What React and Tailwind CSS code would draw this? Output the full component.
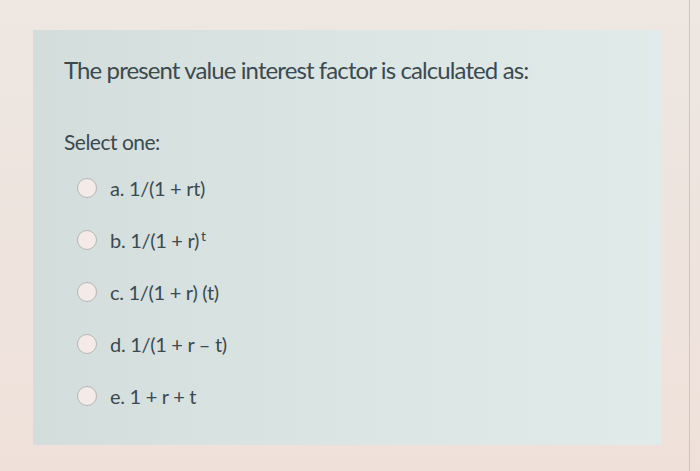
export default function App() {
  const options = [
    { key: 'a', text: <>1/(1 + rt)</> },
    { key: 'b', text: <>1/(1 + r)<sup className="text-[14px] relative -top-[7px] ml-[2px]">t</sup></> },
    { key: 'c', text: <>1/(1 + r) (t)</> },
    { key: 'd', text: <>1/(1 + r – t)</> },
    { key: 'e', text: <>1 + r + t</> },
  ];

  return (
    <div
      className="w-[700px] h-[471px] overflow-hidden bg-gradient-to-b from-[#eee7e2] to-[#efe1da] pt-[30px] pl-[33px] relative"
      style={{ fontFamily: 'Lato, "Open Sans", sans-serif' }}
    >
      <div className="w-[628px] h-[415px] bg-gradient-to-r from-[#d3dddc] via-[#dae5e4] to-[#e1ebe9] text-[#3c4a4f] pl-[31px] pt-[24px]">
        <h1 className="text-[24px] leading-[32px] tracking-[-0.9px]">
          The present value interest factor is calculated as:
        </h1>
        <p className="mt-[42px] text-[21px] leading-[28px] tracking-[-0.5px]">Select one:</p>
        <ul className="mt-[18px] flex flex-col gap-[24px] pl-[13px]">
          {options.map((o) => (
            <li key={o.key} className="flex items-center h-[28px] gap-[13px]">
              <span className="w-[20px] h-[20px] rounded-full border border-[#b8b6b3] bg-[#f4ebe8] shrink-0" />
              <span className="text-[20px] tracking-[-0.3px]">
                {o.key}. {o.text}
              </span>
            </li>
          ))}
        </ul>
      </div>
      <div className="absolute right-[10px] top-0 bottom-0 w-px bg-[#cdc4c0]" />
    </div>
  );
}
